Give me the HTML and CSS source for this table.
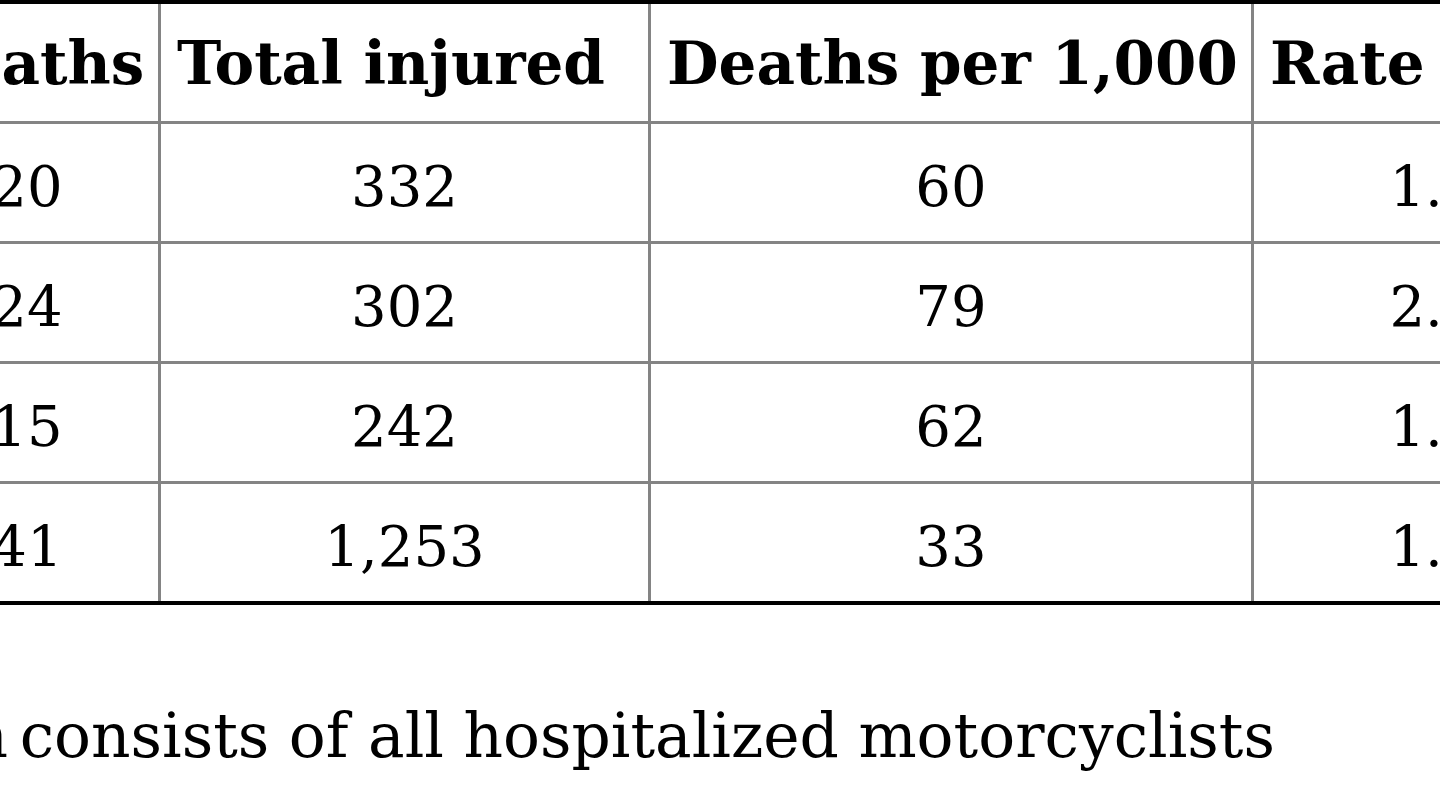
FILE: index.html
```html
<!DOCTYPE html>
<html lang="en">
<head>
<meta charset="utf-8">
<title>Motorcycle injuries table</title>
<link rel="stylesheet" href="styles.css">
</head>
<body>
<main class="page">
  <table class="data">
    <colgroup>
      <col class="c1">
      <col class="c2">
      <col class="c3">
      <col class="c4">
    </colgroup>
    <thead>
      <tr>
        <th>Deaths</th>
        <th>Total injured</th>
        <th>Deaths per 1,000</th>
        <th>Rate ratio</th>
      </tr>
    </thead>
    <tbody>
      <tr><td>20</td><td>332</td><td>60</td><td>1.8</td></tr>
      <tr><td>24</td><td>302</td><td>79</td><td>2.4</td></tr>
      <tr><td>15</td><td>242</td><td>62</td><td>1.9</td></tr>
      <tr><td>41</td><td>1,253</td><td>33</td><td>1.0</td></tr>
    </tbody>
  </table>
  <p class="note"><span class="clip">population</span> consists of all hospitalized motorcyclists</p>
</main>
</body>
</html>
```
FILE: styles.css
```css
html, body {
  margin: 0;
  padding: 0;
  background: #fff;
}
.page {
  width: 1440px;
  height: 810px;
  overflow: hidden;
  font-family: "DejaVu Serif", "Liberation Serif", serif;
  color: #000;
}
.data {
  border-collapse: collapse;
  table-layout: fixed;
  margin-left: -107px;
  width: 1721px;
  border-top: 4px solid #000;
  border-bottom: 4px solid #000;
}
.c1 { width: 265px; }
.c2 { width: 490px; }
.c3 { width: 603px; }
.c4 { width: 363px; }
.data th,
.data td {
  border-left: 3px solid #848484;
  border-right: 3px solid #848484;
  border-bottom: 3px solid #848484;
  text-align: center;
  white-space: nowrap;
  padding: 0 16px;
}
.data th {
  height: 117px;
  font-size: 59.5px;
  font-weight: bold;
  text-align: left;
}
.data td {
  height: 109px;
  font-size: 56px;
  padding-top: 8px;
}
.data tbody tr:last-child td {
  border-bottom: 4px solid #000;
}
.note {
  margin: 95px 0 0 -324px;
  font-size: 61.4px;
  white-space: nowrap;
}
.clip {
  margin-right: -8px;
}
```
